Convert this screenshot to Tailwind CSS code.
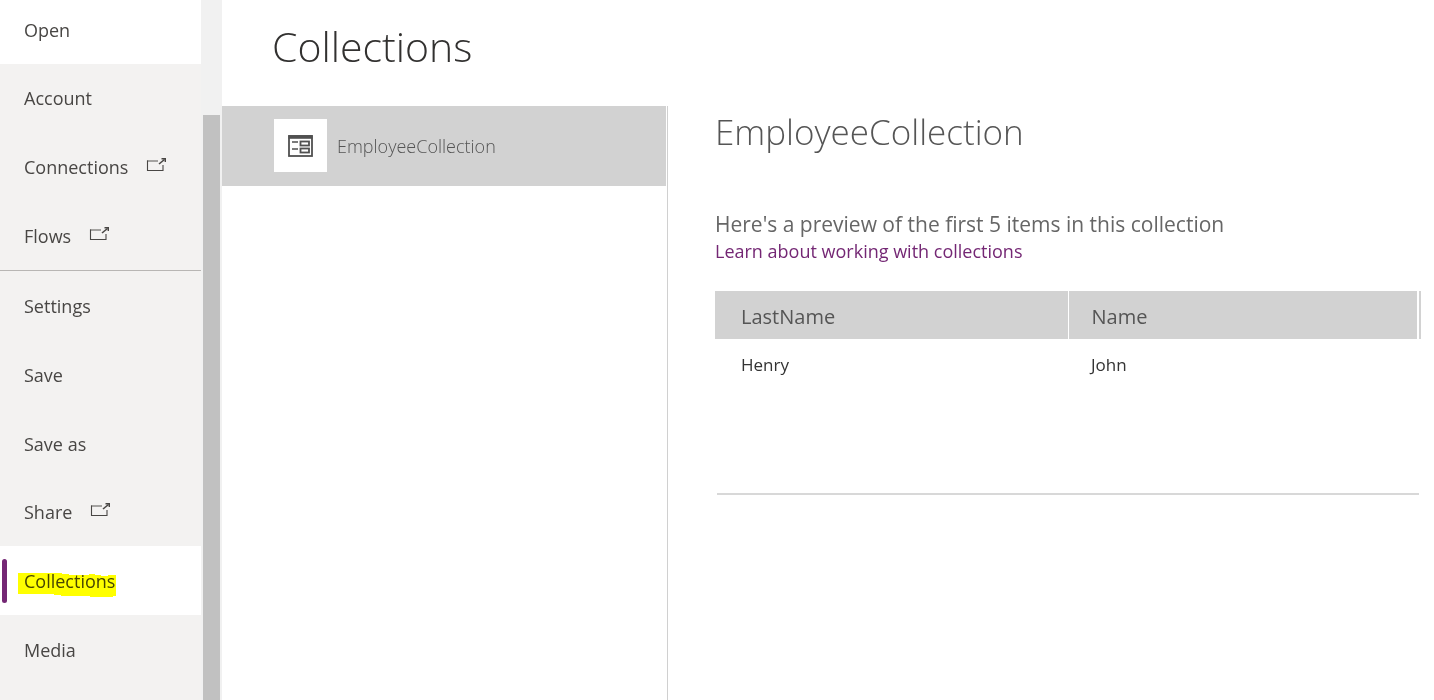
<!DOCTYPE html>
<html lang="en">

<head>
    <meta charset="UTF-8">
    <meta name="viewport" content="width=device-width, initial-scale=1.0">
    <title>Collections</title>
    <script src="https://cdn.jsdelivr.net/npm/@tailwindcss/browser@4"></script>
</head>

<body class="bg-white font-['Open_Sans','Noto_Sans',sans-serif]">
    <div class="flex h-screen overflow-hidden">
        <aside class="flex w-[222px] shrink-0 bg-[#f1f1f1]">
            <nav class="w-[201px] bg-[#f3f2f1] text-lg text-[#484644]">
                <a href="#" class="-mt-[5px] flex h-[69px] items-center bg-white pl-6">Open</a>
                <a href="#" class="flex h-[68px] items-center pl-6">Account</a>
                <a href="#" class="flex h-[69px] items-center gap-[18px] pl-6">Connections
                    <svg class="mb-1 h-4 w-5" viewBox="0 0 20 16" fill="none" stroke="#484644">
                        <path d="M12 4H1" stroke="#8a8886" stroke-width="1.5" />
                        <path d="M1.5 3.5V13.5H17V8" stroke-width="1.1" />
                        <path d="M13 7L18.5 2.5" stroke-width="1.6" />
                        <path d="M15.5 1.7H19.3V5" stroke-width="1.4" />
                    </svg>
                </a>
                <a href="#" class="flex h-[70px] items-center gap-[18px] border-b border-[#b8b6b4] pl-6">Flows
                    <svg class="mb-1 h-4 w-5" viewBox="0 0 20 16" fill="none" stroke="#484644">
                        <path d="M12 4H1" stroke="#8a8886" stroke-width="1.5" />
                        <path d="M1.5 3.5V13.5H17V8" stroke-width="1.1" />
                        <path d="M13 7L18.5 2.5" stroke-width="1.6" />
                        <path d="M15.5 1.7H19.3V5" stroke-width="1.4" />
                    </svg>
                </a>
                <a href="#" class="flex h-[69px] items-center pl-6">Settings</a>
                <a href="#" class="flex h-[69px] items-center pl-6">Save</a>
                <a href="#" class="flex h-[69px] items-center pl-6">Save as</a>
                <a href="#" class="flex h-[68px] items-center gap-[18px] pl-6">Share
                    <svg class="mb-1 h-4 w-5" viewBox="0 0 20 16" fill="none" stroke="#484644">
                        <path d="M12 4H1" stroke="#8a8886" stroke-width="1.5" />
                        <path d="M1.5 3.5V13.5H17V8" stroke-width="1.1" />
                        <path d="M13 7L18.5 2.5" stroke-width="1.6" />
                        <path d="M15.5 1.7H19.3V5" stroke-width="1.4" />
                    </svg>
                </a>
                <a href="#" aria-current="page" class="relative flex h-[69px] items-center bg-white pl-0.5">
                    <span class="mr-[17px] h-11 w-[5px] rounded-sm bg-[#742774]"></span>
                    Collections
                    <!-- marker highlight -->
                    <svg class="absolute top-[25px] left-[18px] h-7 w-[99px] mix-blend-multiply" viewBox="0 0 99 28" fill="#ffff00">
                        <path d="M0 2H44V3H51V4H71V3H77V4H83V5H90V4H98V25H95V26H72V25H43V24H36V23H0Z" />
                    </svg>
                </a>
                <a href="#" class="flex h-[69px] items-center pl-6">Media</a>
            </nav>
            <!-- scrollbar -->
            <div class="flex-1 pt-[115px] pr-0.5 pl-0.5">
                <div class="h-full bg-[#c1c1c1]"></div>
            </div>
        </aside>

        <main class="flex min-w-0 flex-1 flex-col">
            <h1 class="h-[106px] pt-3.5 pl-[50px] text-[41px] leading-[64px] font-light text-[#323130]">Collections</h1>
            <div class="flex flex-1">
                <div class="w-[446px] shrink-0 border-r border-[#d0d0d0] pr-px">
                    <button type="button" class="flex h-20 w-full items-center gap-2.5 bg-[#d2d2d2] pb-px pl-[52px] text-lg font-light text-[#555]">
                        <span class="flex size-[53px] items-center justify-center bg-white">
                            <svg class="h-[22px] w-[25px]" viewBox="0 0 25 22" fill="none" stroke="#505050">
                                <rect x="1" y="1" width="23" height="20" stroke-width="1.8" />
                                <path d="M0.5 2H24.5" stroke-width="3.6" />
                                <path d="M4 7H10M4 14H10" stroke-width="1.6" />
                                <rect x="12.5" y="6.5" width="8.5" height="4" stroke-width="1.8" />
                                <rect x="12.5" y="13.5" width="8.5" height="4" stroke-width="1.8" />
                            </svg>
                        </span>
                        EmployeeCollection
                    </button>
                </div>

                <section class="min-w-0 flex-1 pr-[13px] pl-[47px]">
                    <h2 class="text-[35px] leading-[52px] font-light text-[#555]">EmployeeCollection</h2>
                    <p class="mt-[52px] text-[21px] leading-7 text-[#666]">Here's a preview of the first 5 items in this collection</p>
                    <a href="#" class="block text-lg leading-[26px] text-[#742774]">Learn about working with collections</a>
                    <div class="mt-[27px] h-[202px]">
                        <table class="w-full table-fixed text-left">
                            <colgroup>
                                <col class="w-1/2">
                                <col>
                                <col class="w-[3px]">
                            </colgroup>
                            <thead>
                                <tr class="h-12 bg-[#d2d2d2] text-xl text-[#555]">
                                    <th scope="col" class="border-r border-white pt-1 pl-[26px] font-normal">LastName</th>
                                    <th scope="col" class="border-r-2 border-white pt-1 pl-[23px] font-normal">Name</th>
                                    <td class="p-0"></td>
                                </tr>
                            </thead>
                            <tbody>
                                <tr class="h-[52px] text-[17px] text-[#333]">
                                    <td class="pl-[26px]">Henry</td>
                                    <td class="pl-[23px]">John</td>
                                    <td class="p-0"></td>
                                </tr>
                            </tbody>
                        </table>
                    </div>
                    <hr class="mx-0.5 border-t-2 border-[#d8d8d8]">
                </section>
            </div>
        </main>
    </div>
</body>

</html>
